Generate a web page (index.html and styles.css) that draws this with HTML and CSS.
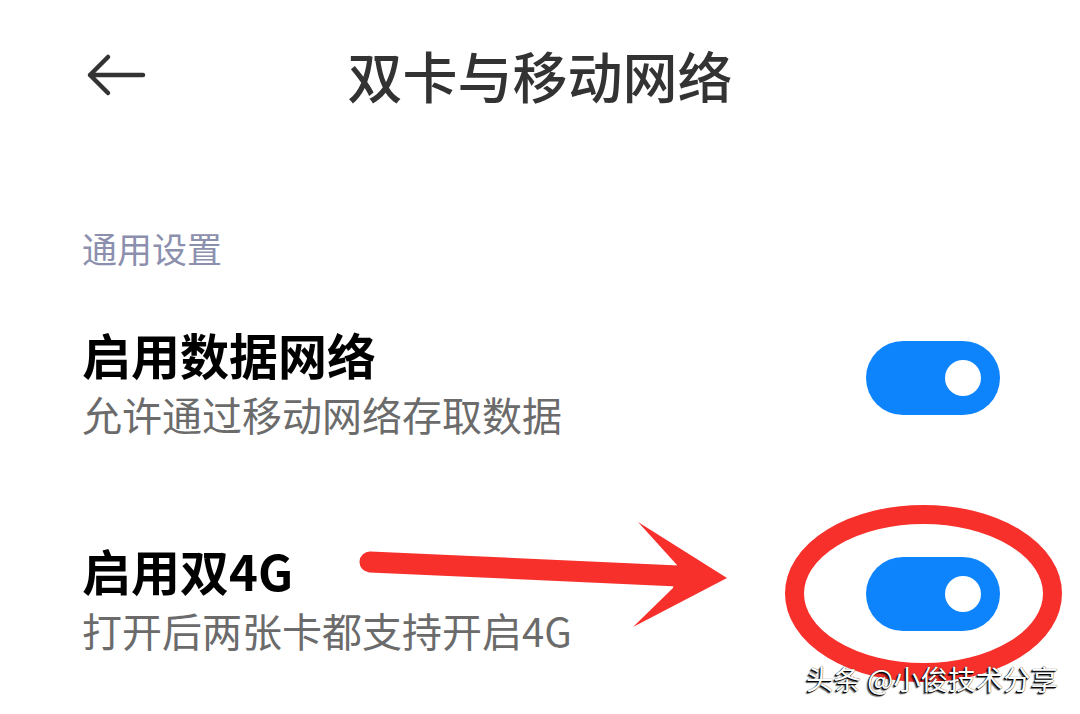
FILE: index.html
```html
<!DOCTYPE html>
<html lang="zh-CN">

<head>
    <meta charset="UTF-8">
    <meta name="viewport" content="width=device-width, initial-scale=1.0">
    <title>双卡与移动网络</title>
    <link rel="stylesheet" href="styles.css">
</head>

<body>
    <div class="screen">
        <div class="topbar">
            <div class="back">
                <svg width="64" height="44" viewBox="84 57 64 44">
                    <path d="M143 79 H90 M108 61 L90 79 L108 97" fill="none" stroke="#333" stroke-width="4.5" stroke-linecap="round" stroke-linejoin="round"/>
                </svg>
            </div>
            <h1 class="page-title">双卡与移动网络</h1>
            <div></div>
        </div>

        <div class="section-title">通用设置</div>

        <div class="item">
            <div class="item-text">
                <div class="item-title">启用数据网络</div>
                <div class="item-desc">允许通过移动网络存取数据</div>
            </div>
            <div class="switch switch-first"><span class="knob"></span></div>
        </div>

        <div class="item">
            <div class="item-text">
                <div class="item-title">启用双4G</div>
                <div class="item-desc">打开后两张卡都支持开启4G</div>
            </div>
            <div class="switch switch-second"><span class="knob"></span></div>
        </div>

        <!-- red markup drawn over the screenshot -->
        <svg class="markup" width="1080" height="714" viewBox="0 0 1080 714">
            <ellipse cx="923.5" cy="593.5" rx="129" ry="79" fill="none" stroke="#f7302b" stroke-width="19"/>
            <path d="M370 562 L678 576" stroke="#f7302b" stroke-width="21" stroke-linecap="round"/>
            <polygon points="638,522 727,578 633,627 673,588 677,565" fill="#f7302b"/>
        </svg>

        <div class="watermark">头条 @小俊技术分享</div>
    </div>
</body>

</html>
```

FILE: styles.css
```css
body {
    margin: 0;
    background: #fff;
    font-family: "Noto Sans CJK SC", "Noto Sans", sans-serif;
}

.screen {
    position: relative;
    width: 1080px;
    height: 714px;
    overflow: hidden;
    padding: 0 80px 0 82px;
    box-sizing: border-box;
}

.topbar {
    display: grid;
    grid-template-columns: 1fr auto 1fr;
    align-items: center;
    margin: 0 -80px 0 -82px;
    padding-top: 47px;
}

.back {
    padding-left: 84px;
    display: flex;
    align-items: center;
}

.back svg {
    display: block;
}

.page-title {
    margin: 0;
    font-size: 55px;
    line-height: 55px;
    font-weight: 500;
    color: #333;
}

.section-title {
    margin-top: 128px;
    margin-bottom: 9px;
    font-size: 35px;
    line-height: 35px;
    color: #8c90ae;
}

.item {
    display: flex;
    align-items: center;
    justify-content: space-between;
    padding: 55px 0 56px;
}

.item-title {
    font-size: 49px;
    line-height: 49px;
    font-weight: 700;
    color: #000;
}

.item-desc {
    margin-top: 16px;
    font-size: 40px;
    line-height: 40px;
    color: #6b6b6b;
}

.switch {
    width: 134px;
    height: 74px;
    border-radius: 37px;
    background: #0d84fc;
    display: flex;
    align-items: center;
    justify-content: flex-end;
    padding-right: 19px;
    box-sizing: border-box;
}

.switch-first {
    margin-bottom: 8px;
}

.switch-second {
    margin-bottom: 8px;
}

.knob {
    width: 36px;
    height: 36px;
    border-radius: 50%;
    background: #fff;
}

.markup {
    position: absolute;
    top: 0;
    left: 0;
    pointer-events: none;
}

.watermark {
    position: absolute;
    left: 806px;
    top: 662px;
    font-size: 27.5px;
    line-height: 32px;
    color: #fff;
    white-space: nowrap;
    text-shadow: -1px 1px 0 #000, -2px 2px 1px rgba(0, 0, 0, 0.6), 0 0 1px #000;
}
```
